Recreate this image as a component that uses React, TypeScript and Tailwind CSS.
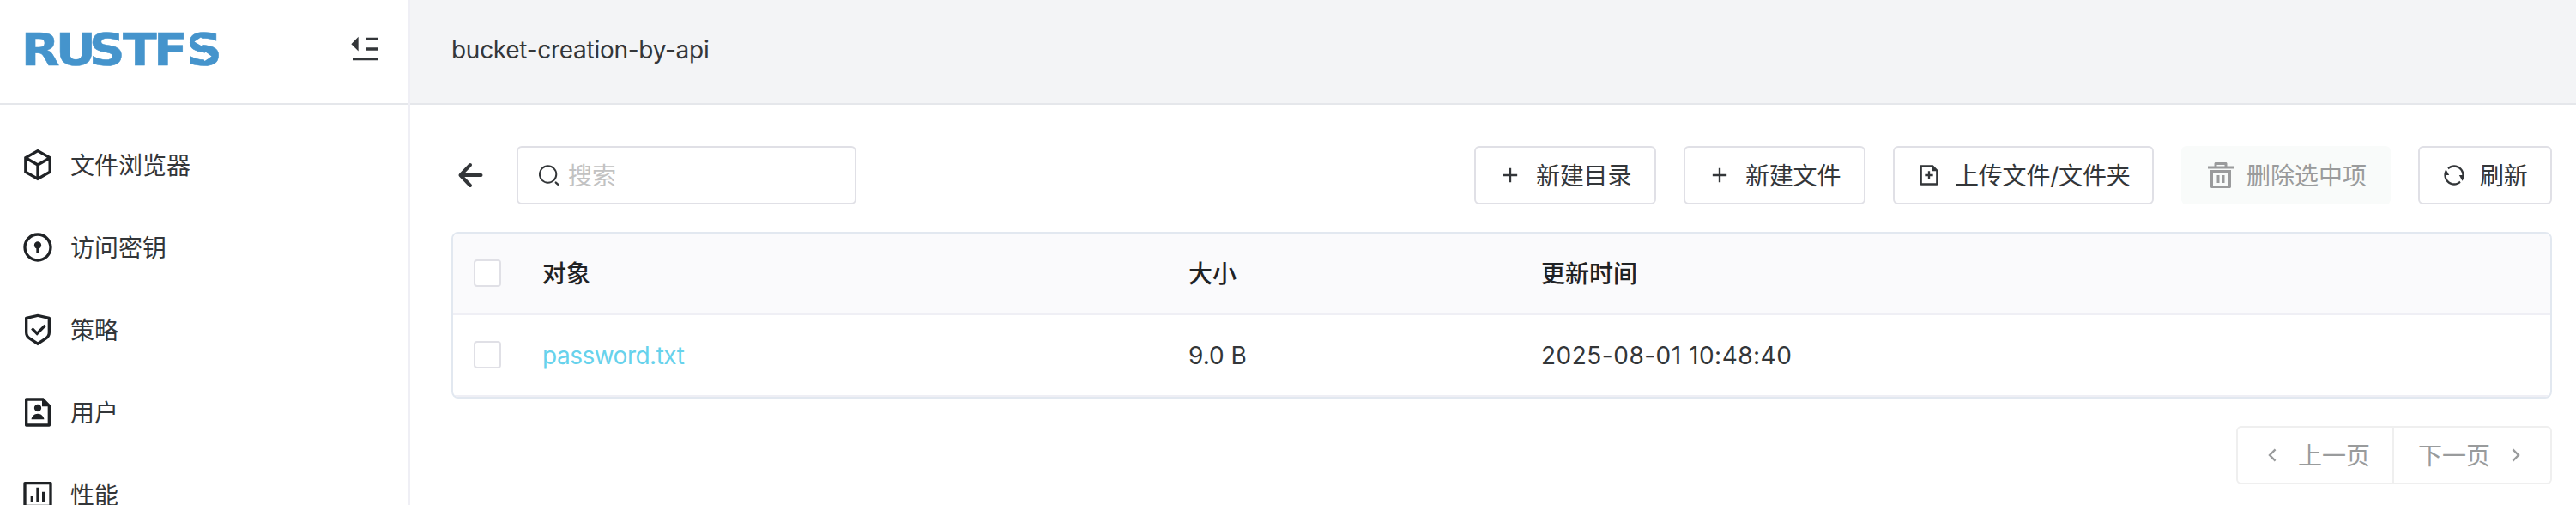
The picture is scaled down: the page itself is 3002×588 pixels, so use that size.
import type { ReactNode } from "react";
import {
  RiMenuFoldFill,
  RiBox3Line,
  RiDoorLockLine,
  RiShieldCheckLine,
  RiFileUserLine,
  RiBarChartBoxLine,
  RiAddLine,
  RiFileAddLine,
  RiDeleteBin5Line,
  RiRefreshLine,
  RiArrowLeftSLine,
  RiArrowRightSLine,
} from "react-icons/ri";

const navItems = [
  { label: "文件浏览器", Icon: RiBox3Line },
  { label: "访问密钥", Icon: RiDoorLockLine },
  { label: "策略", Icon: RiShieldCheckLine },
  { label: "用户", Icon: RiFileUserLine },
  { label: "性能", Icon: RiBarChartBoxLine },
];

function Logo() {
  return (
    <svg viewBox="0 0 226 38" className="h-[38px] w-[226px] overflow-visible font-['DejaVu_Sans',sans-serif] text-[52px] font-bold">
      <text transform="scale(1.12 1)" x="-4.7 31 65.8 101 133 167" y="38" fill="#4594cc" stroke="#4594cc" strokeWidth="0.5">
        RUSTFS
      </text>
      <path d="M196.5 10.5 L204 5.5 L208 9 L205 15.5 Z M216.5 27.5 L209.5 22.5 L206 28 L208.5 33 Z" fill="#fff" />
    </svg>
  );
}

function ActionButton({ icon, label, className }: { icon: ReactNode; label: string; className: string }) {
  return (
    <button className={"flex h-[68px] items-center gap-4 rounded-md border-2 border-[#e0e0e6] pl-[26px] whitespace-nowrap " + className}>
      {icon}
      <span className="pt-[2px] tracking-[-0.2px]">{label}</span>
    </button>
  );
}

function Checkbox() {
  return <span className="block h-8 w-8 rounded-[4px] border-2 border-[#e0e0e6] bg-white" />;
}

export default function App() {
  return (
    <div className="flex h-[588px] w-[3002px] overflow-hidden bg-white font-['Inter','Noto_Sans_CJK_SC',sans-serif] text-[28px] leading-[44px] text-[#333639]">
      <aside className="flex w-[478px] shrink-0 flex-col border-r-2 border-[#efeff5]">
        <div className="flex h-[122px] shrink-0 items-center justify-between border-b-2 border-[#e5e7eb] pr-[30px] pb-[6px] pl-[30px]">
          <Logo />
          <RiMenuFoldFill className="h-10 w-10" />
        </div>
        <nav className="flex flex-col pt-[22px] pl-6">
          {navItems.map(({ label, Icon }) => (
            <a key={label} className="flex h-24 shrink-0 items-center gap-[18px]">
              <Icon className="h-10 w-10 text-[#1f2225]" />
              <span className="pt-[2px]">{label}</span>
            </a>
          ))}
        </nav>
      </aside>
      <main className="flex grow flex-col">
        <header className="flex h-[122px] shrink-0 items-center border-b-2 border-[#e5e7eb] bg-[#f3f4f6] pb-[5px] pl-12">
          <span className="tracking-[-0.28px]">bucket-creation-by-api</span>
        </header>
        <div className="flex flex-col pt-12 pr-7 pl-12">
          <div className="flex h-[68px] items-center">
            <svg viewBox="0 0 32 32" className="mr-[37px] ml-[7px] h-8 w-8" fill="none" stroke="currentColor" strokeWidth="4" strokeLinecap="round" strokeLinejoin="round">
              <path d="M15 4 L3.5 16 L15 28 M4.5 16 H27.5" />
            </svg>
            <div className="flex h-[68px] w-[396px] items-center rounded-md border-2 border-[#e0e0e6] pl-6">
              <svg viewBox="0 0 28 28" className="h-7 w-7" fill="none" stroke="currentColor" strokeWidth="2" strokeLinecap="round">
                <circle cx="10.6" cy="13" r="9.7" />
                <path d="M19.8 22.6 L22.4 24.8" strokeWidth="2.4" />
              </svg>
              <span className="ml-[6px] pt-[2px] text-[#c2c2c2]">搜索</span>
            </div>
            <div className="ml-auto flex gap-8">
              <ActionButton icon={<RiAddLine className="h-7 w-7" />} label="新建目录" className="w-[212px]" />
              <ActionButton icon={<RiAddLine className="h-7 w-7" />} label="新建文件" className="w-[212px]" />
              <ActionButton icon={<RiFileAddLine className="h-7 w-7" />} label="上传文件/文件夹" className="w-[304px]" />
              <button className="flex h-[68px] w-[244px] items-center gap-3 rounded-md bg-[#f9fbfa] pl-7 whitespace-nowrap text-[#9a9b9c]">
                <RiDeleteBin5Line className="h-9 w-9" />
                <span className="pt-[2px]">删除选中项</span>
              </button>
              <ActionButton icon={<RiRefreshLine className="h-7 w-7" />} label="刷新" className="w-[156px]" />
            </div>
          </div>
          <div className="mt-8 flex h-[194px] flex-col overflow-hidden rounded-lg border-2 border-[#e2e8f0]">
            <div className="flex h-[95px] items-center border-b-2 border-[#efeff5] bg-[#fafafc] pb-px pl-6 font-medium text-[#1f2225]">
              <div className="w-20"><Checkbox /></div>
              <div className="w-[753px] pt-[2px]">对象</div>
              <div className="w-[411px] pt-[2px]">大小</div>
              <div className="pt-[2px]">更新时间</div>
            </div>
            <div className="flex h-[95px] items-center border-b-2 border-[#efeff5] pb-px pl-6">
              <div className="w-20"><Checkbox /></div>
              <div className="w-[753px] pt-px tracking-[-0.5px] text-[#67d2ec]">password.txt</div>
              <div className="w-[411px] pt-px">9.0 B</div>
              <div className="pt-px tracking-[0.5px]">2025-08-01 10:48:40</div>
            </div>
          </div>
          <div className="mt-8 flex h-[68px] self-end rounded-md border-2 border-[#efefef] text-[#999b9c]">
            <button className="flex w-[182px] items-center gap-4 border-r-2 border-[#efefef] pl-[26px]">
              <RiArrowLeftSLine className="h-7 w-7" />
              <span className="pt-px">上一页</span>
            </button>
            <button className="flex w-[182px] items-center gap-4 pl-7">
              <span className="pt-px">下一页</span>
              <RiArrowRightSLine className="h-7 w-7" />
            </button>
          </div>
        </div>
      </main>
    </div>
  );
}
